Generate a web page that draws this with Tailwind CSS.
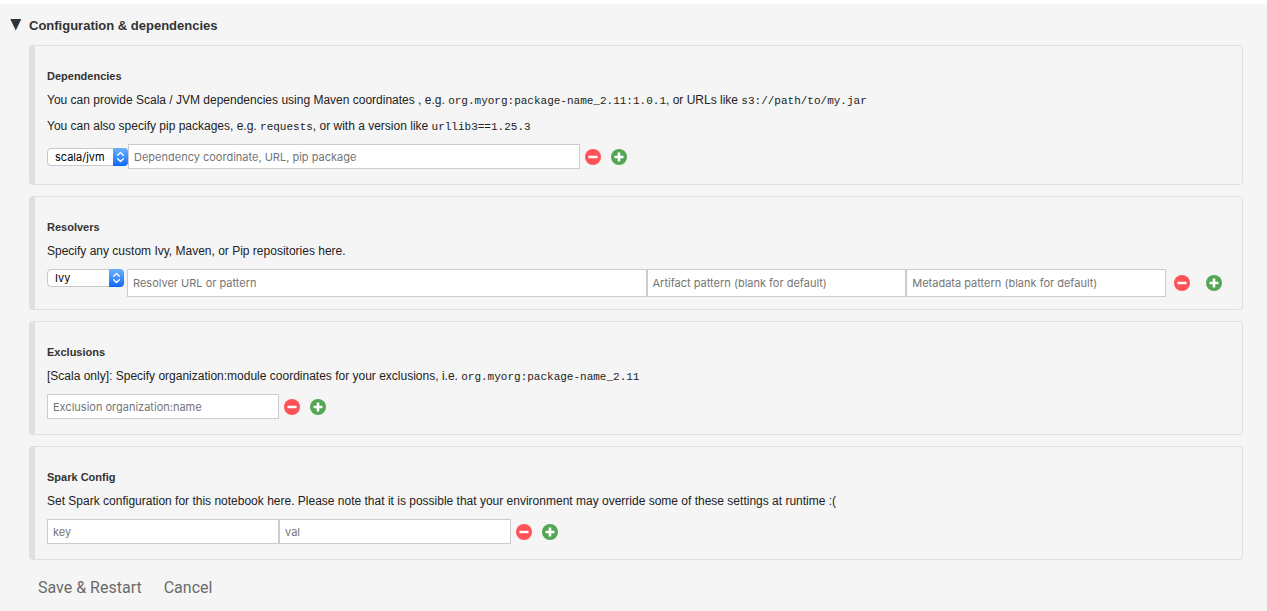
<!DOCTYPE html>
<html lang="en">
    <head>
        <meta charset="UTF-8">
        <meta name="viewport" content="width=device-width, initial-scale=1.0">
        <title>Notebook configuration</title>
        <script src="https://cdn.jsdelivr.net/npm/@tailwindcss/browser@4"></script>
    </head>
    <body class="bg-[#f5f5f5] border-t-4 border-white min-h-screen font-['Liberation_Sans',Arial,sans-serif] text-[11px] leading-4 text-[#222]">

        <!-- shared icons -->
        <svg class="hidden" xmlns="http://www.w3.org/2000/svg">
            <symbol id="minus" viewBox="0 0 16 16">
                <circle cx="8" cy="8" r="8" fill="#ff5257"/>
                <rect x="3.5" y="6.7" width="9" height="2.6" rx=".5" fill="#fff"/>
            </symbol>
            <symbol id="plus" viewBox="0 0 16 16">
                <circle cx="8" cy="8" r="8" fill="#53a653"/>
                <path d="M6.7 3.5h2.6v3.2h3.2v2.6H9.3v3.2H6.7V9.3H3.5V6.7h3.2z" fill="#fff"/>
            </symbol>
            <symbol id="updown" viewBox="0 0 15 18">
                <path d="M4.7 7.2 7.5 4.4l2.8 2.8M4.7 10.8l2.8 2.8 2.8-2.8" fill="none" stroke="#fff" stroke-width="1.4" stroke-linecap="round" stroke-linejoin="round"/>
            </symbol>
        </svg>

        <main class="pl-[29px] pr-6 pt-3">
            <h2 class="relative text-[13px] leading-5 font-bold text-[#333]">
                <svg class="absolute -left-[19px] top-[3px] w-3 h-3" viewBox="0 0 12 12"><path d="M.3 0h11L5.8 11.5z" fill="#333"/></svg>
                Configuration &amp; dependencies
            </h2>

            <div class="mt-[9px] flex flex-col gap-[11px]">
                <section class="border border-l-6 border-[#e0e0e0] rounded pt-[22px] pb-[15px] pl-3 pr-5">
                    <h3 class="font-bold text-[#333] mb-2">Dependencies</h3>
                    <p class="text-[12px] leading-4 mb-[10px]">You can provide Scala / JVM dependencies using Maven coordinates , e.g. <code class="font-['Liberation_Mono',monospace] text-[11px] leading-none">org.myorg:package-name_2.11:1.0.1</code>, or URLs like <code class="font-['Liberation_Mono',monospace] text-[11px] leading-none">s3://path/to/my.jar</code></p>
                    <p class="text-[12px] leading-4 mb-[10px]">You can also specify pip packages, e.g. <code class="font-['Liberation_Mono',monospace] text-[11px] leading-none">requests</code>, or with a version like <code class="font-['Liberation_Mono',monospace] text-[11px] leading-none">urllib3==1.25.3</code></p>
                    <div class="flex items-center font-[Inter,sans-serif]">
                        <div class="relative w-[81px] h-[18px] shrink-0">
                            <select aria-label="Dependency type" class="appearance-none w-full h-full pl-[7px] pr-4 bg-white border border-[#c8c8c8] rounded text-black leading-4">
                                <option>scala/jvm</option>
                                <option>pip</option>
                            </select>
                            <svg class="pointer-events-none absolute right-0 top-0 w-[15px] h-[18px] rounded-r bg-linear-to-b from-[#6cb0fb] to-[#0669fb]"><use href="#updown"/></svg>
                        </div>
                        <input type="text" aria-label="Dependency" placeholder="Dependency coordinate, URL, pip package" class="w-[452px] h-[25px] px-[5px] bg-white border border-[#ccc] placeholder:text-[#757575]">
                        <button type="button" aria-label="Remove dependency" class="ml-[5px]"><svg class="size-4"><use href="#minus"/></svg></button>
                        <button type="button" aria-label="Add dependency" class="ml-[10px]"><svg class="size-4"><use href="#plus"/></svg></button>
                    </div>
                </section>

                <section class="border border-l-6 border-[#e0e0e0] rounded pt-[22px] pb-3 pl-3 pr-5">
                    <h3 class="font-bold text-[#333] mb-2">Resolvers</h3>
                    <p class="text-[12px] leading-4 mb-[10px]">Specify any custom Ivy, Maven, or Pip repositories here.</p>
                    <div class="flex items-center font-[Inter,sans-serif]">
                        <div class="relative w-[77px] h-[18px] shrink-0 self-start mr-[3px]">
                            <select aria-label="Resolver type" class="appearance-none w-full h-full pl-[7px] pr-4 bg-white border border-[#c8c8c8] rounded text-black leading-4">
                                <option>Ivy</option>
                                <option>Maven</option>
                                <option>Pip</option>
                            </select>
                            <svg class="pointer-events-none absolute right-0 top-0 w-[15px] h-[18px] rounded-r bg-linear-to-b from-[#6cb0fb] to-[#0669fb]"><use href="#updown"/></svg>
                        </div>
                        <div class="grow grid grid-cols-[2fr_1fr_1fr]">
                            <input type="text" aria-label="Resolver URL or pattern" placeholder="Resolver URL or pattern" class="min-w-0 h-7 px-[5px] bg-white border border-[#ccc] placeholder:text-[#757575]">
                            <input type="text" aria-label="Artifact pattern" placeholder="Artifact pattern (blank for default)" class="min-w-0 h-7 px-[5px] bg-white border border-[#ccc] placeholder:text-[#757575]">
                            <input type="text" aria-label="Metadata pattern" placeholder="Metadata pattern (blank for default)" class="min-w-0 h-7 px-[5px] bg-white border border-[#ccc] placeholder:text-[#757575]">
                        </div>
                        <button type="button" aria-label="Remove resolver" class="ml-2"><svg class="size-4"><use href="#minus"/></svg></button>
                        <button type="button" aria-label="Add resolver" class="ml-4"><svg class="size-4"><use href="#plus"/></svg></button>
                    </div>
                </section>

                <section class="border border-l-6 border-[#e0e0e0] rounded pt-[22px] pb-[15px] pl-3 pr-5">
                    <h3 class="font-bold text-[#333] mb-2">Exclusions</h3>
                    <p class="text-[12px] leading-4 mb-[10px]">[Scala only]: Specify organization:module coordinates for your exclusions, i.e. <code class="font-['Liberation_Mono',monospace] text-[11px] leading-none">org.myorg:package-name_2.11</code></p>
                    <div class="flex items-center font-[Inter,sans-serif]">
                        <input type="text" aria-label="Exclusion" placeholder="Exclusion organization:name" class="w-[232px] h-[25px] px-[5px] bg-white border border-[#ccc] placeholder:text-[#757575]">
                        <button type="button" aria-label="Remove exclusion" class="ml-[5px]"><svg class="size-4"><use href="#minus"/></svg></button>
                        <button type="button" aria-label="Add exclusion" class="ml-[10px]"><svg class="size-4"><use href="#plus"/></svg></button>
                    </div>
                </section>

                <section class="border border-l-6 border-[#e0e0e0] rounded pt-[22px] pb-[15px] pl-3 pr-5">
                    <h3 class="font-bold text-[#333] mb-2">Spark Config</h3>
                    <p class="text-[12px] leading-4 mb-[10px]">Set Spark configuration for this notebook here. Please note that it is possible that your environment may override some of these settings at runtime :(</p>
                    <div class="flex items-center font-[Inter,sans-serif]">
                        <input type="text" aria-label="Key" placeholder="key" class="w-[232px] h-[25px] px-[5px] bg-white border border-[#ccc] placeholder:text-[#757575]">
                        <input type="text" aria-label="Value" placeholder="val" class="w-[232px] h-[25px] px-[5px] bg-white border border-[#ccc] placeholder:text-[#757575]">
                        <button type="button" aria-label="Remove setting" class="ml-[5px]"><svg class="size-4"><use href="#minus"/></svg></button>
                        <button type="button" aria-label="Add setting" class="ml-[10px]"><svg class="size-4"><use href="#plus"/></svg></button>
                    </div>
                </section>
            </div>

            <div class="mt-4 pl-[9px] flex gap-[22px] font-[Roboto,sans-serif] text-[16px] leading-6 text-[#6b6b6b]">
                <button type="button">Save &amp; Restart</button>
                <button type="button">Cancel</button>
            </div>
        </main>
    </body>
</html>
